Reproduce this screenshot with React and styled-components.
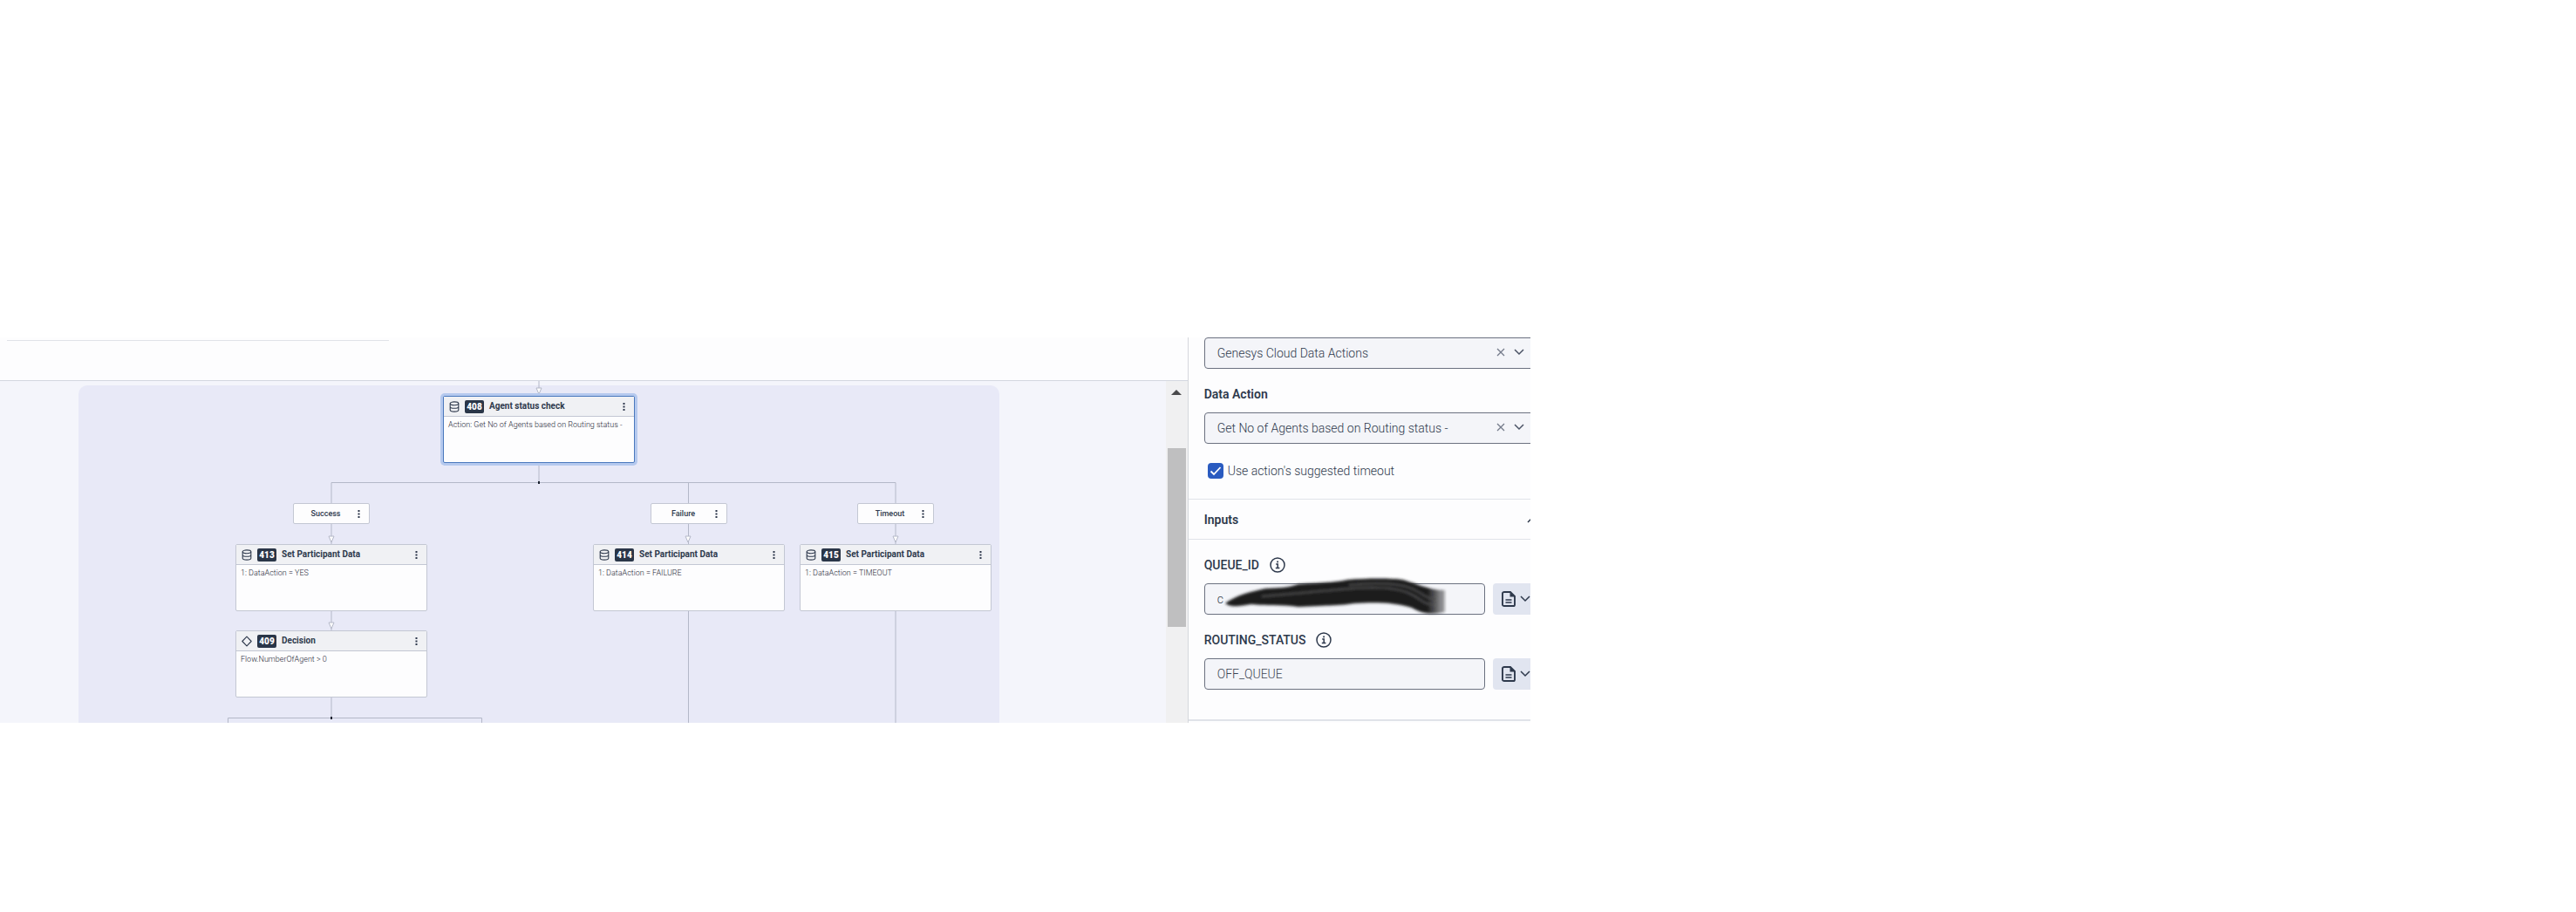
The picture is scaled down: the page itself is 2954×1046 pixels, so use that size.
import React from 'react'
import styled, { createGlobalStyle, css } from 'styled-components'

const GlobalStyle = createGlobalStyle`
  * {
    box-sizing: border-box;
  }
  body {
    margin: 0;
    background: #ffffff;
    font-family: 'Roboto', 'Liberation Sans', sans-serif;
    color: #2e394c;
  }
  button,
  input,
  select {
    font-family: inherit;
    margin: 0;
  }
`

const Page = styled.div`
  padding-top: 387px;
`

const Editor = styled.div`
  width: 59.4%;
  display: grid;
  grid-template-columns: minmax(0, 1fr) 393px;
  background: #fdfdfe;
  overflow: hidden;
`

const Workspace = styled.main`
  display: flex;
  flex-direction: column;
`

const Toolbar = styled.header`
  height: 50px;
  padding: 3px 8px 0;
  border-bottom: 1px solid #d3d7e0;

  hr {
    width: 438px;
    margin: 0;
    border: none;
    border-top: 1px solid #e1e3e8;
  }
`

const CanvasRow = styled.div`
  display: flex;
  flex: 1;
`

const Canvas = styled.div`
  position: relative;
  flex: 1;
  min-height: 392px;
  padding: 5px 0 0 90px;
  display: flex;
  background: #f4f5fb;
  overflow: hidden;
`

const Group = styled.div`
  width: 1056px;
  border-radius: 10px 10px 0 0;
  background: #e8e9f7;
`

const Lines = styled.svg`
  position: absolute;
  top: 0;
  left: 0;
  width: 1146px;
  height: 392px;
`

const onCanvas = css`
  position: absolute;
  left: ${(props) => props.$x}px;
  top: ${(props) => props.$y}px;
`

const Node = styled.article`
  ${onCanvas}
  width: 220px;
  height: 77px;
  background: #fdfdfe;
  border: 1px solid ${(props) => (props.$selected ? '#4a78bd' : '#c3c7d3')};
  border-radius: 2px;
  box-shadow: ${(props) => (props.$selected ? '0 0 0 3px #b5c9ee' : 'none')};
`

const NodeHeader = styled.div`
  height: 23px;
  padding: 0 10px 0 6px;
  display: flex;
  align-items: center;
  background: #f0f1f4;
  border-bottom: 1px solid #c3c7d3;

  h3 {
    flex: 1;
    margin: 0 0 0 6px;
    font-size: 10px;
    line-height: 14px;
    font-weight: 700;
  }
`

const Badge = styled.span`
  width: 22px;
  margin-left: 6px;
  border-radius: 2px;
  background: #2a3648;
  color: #ffffff;
  font-size: 10px;
  line-height: 15px;
  font-weight: 900;
  text-align: center;
`

const NodeText = styled.p`
  margin: 0;
  padding: 3px 5px;
  font-size: 9px;
  line-height: 12px;
  font-weight: 300;
  color: #1f2838;
  white-space: nowrap;
`

const Outcome = styled.div`
  ${onCanvas}
  width: 88px;
  height: 24px;
  padding-right: 10px;
  display: flex;
  align-items: center;
  background: #fdfdfe;
  border: 1px solid #c3c7d3;
  border-radius: 2px;

  span {
    flex: 1;
    font-size: 9px;
    line-height: 12px;
    font-weight: 500;
    text-align: center;
  }
`

const IconButton = styled.button`
  display: flex;
  padding: 0;
  border: none;
  background: none;
  color: inherit;
`

const Scrollbar = styled.div`
  width: 25px;
  padding: 10px 2px 0;
  display: flex;
  flex-direction: column;
  align-items: center;
  gap: 61px;
  background: #f0f0f1;
`

const ScrollThumb = styled.div`
  width: 21px;
  height: 205px;
  background: #bfbfc0;
`

const Panel = styled.aside`
  border-left: 1px solid #d5d7dc;
`

const Section = styled.section`
  height: ${(props) => props.$height}px;
  padding-left: 18px;
  border-bottom: ${(props) => props.$line || 1}px solid #e0e3e9;
`

const SectionHeader = styled(Section)`
  display: flex;
  align-items: center;
  justify-content: space-between;

  h2 {
    margin: 0;
    font-size: 14px;
    line-height: 20px;
    font-weight: 600;
  }
  button {
    margin-right: -8px;
  }
`

const Label = styled.label`
  font-size: 14px;
  line-height: 20px;
  font-weight: ${(props) => (props.$medium ? 500 : 600)};
`

const LabelRow = styled.div`
  height: 50px;
  padding-top: 8px;
  display: flex;
  align-items: center;
  gap: 12px;
`

const SelectBox = styled.div`
  position: relative;
  margin-right: -8px;
`

const Select = styled.select`
  width: 100%;
  height: 36px;
  padding: 0 60px 0 14px;
  appearance: none;
  border: 1px solid #6b7180;
  border-radius: 4px;
  background: #f4f5f9;
  color: #2e394c;
  font-size: 14px;
  font-weight: 300;
`

const SelectIcons = styled.div`
  position: absolute;
  top: 0;
  right: 15px;
  height: 34px;
  display: flex;
  align-items: center;
  gap: 10px;
  color: #4b5466;
`

const CheckRow = styled.label`
  height: 62px;
  padding: 0 0 0 4px;
  display: flex;
  align-items: center;
  gap: 5px;
  color: #2e394c;
  font-size: 14px;
  line-height: 20px;
  font-weight: 300;

  span {
    position: relative;
    display: flex;
  }
  input {
    width: 18px;
    height: 18px;
    appearance: none;
    border-radius: 4px;
    background: #2a5bc0;
  }
  svg {
    position: absolute;
    top: 3px;
    left: 2px;
  }
`

const InputRow = styled.div`
  position: relative;
  display: flex;
  gap: 9px;
  margin-right: -8px;
`

const Input = styled.input`
  width: 322px;
  height: 36px;
  padding: 0 14px;
  border: 1px solid #6b7180;
  border-radius: 4px;
  background: #f4f5f9;
  color: #3c4452;
  font-size: 14px;
  font-weight: 300;
`

const ModeButton = styled.button`
  flex: 1;
  height: 36px;
  padding: 0 0 0 10px;
  display: flex;
  align-items: center;
  gap: 5px;
  border: none;
  border-radius: 4px;
  background: #e1e5f0;
  color: #2e394c;
`

const Scribble = styled.svg`
  position: absolute;
  top: -8px;
  left: 16px;
`

const DotsIcon = () => (
  <svg width="3" height="11" viewBox="0 0 3 11" fill="currentColor">
    <rect x="0.5" y="1" width="2" height="2" />
    <rect x="0.5" y="4.5" width="2" height="2" />
    <rect x="0.5" y="8" width="2" height="2" />
  </svg>
)

const DataIcon = () => (
  <svg width="12" height="13" viewBox="0 0 12 13" fill="none" stroke="currentColor" strokeWidth="1.1">
    <ellipse cx="6" cy="2.8" rx="4.8" ry="1.9" />
    <path d="M1.2 2.8v7.4c0 1 2.1 1.9 4.8 1.9s4.8-.9 4.8-1.9V2.8M1.2 6.4c0 1 2.1 1.8 4.8 1.8s4.8-.8 4.8-1.8" />
  </svg>
)

const DecisionIcon = () => (
  <svg width="12" height="13" viewBox="0 0 12 13" fill="none" stroke="currentColor" strokeWidth="1.1">
    <path d="M6 1.2 11.2 6.5 6 11.8.8 6.5z" strokeLinejoin="round" />
  </svg>
)

const ChevronIcon = ({ up }) => (
  <svg width="12" height="8" viewBox="0 0 12 8" fill="none" stroke="currentColor" strokeWidth="1.5">
    <path d={up ? 'M1 7l5-5 5 5' : 'M1 1l5 5 5-5'} />
  </svg>
)

const CloseIcon = () => (
  <svg width="10" height="10" viewBox="0 0 10 10" fill="none" stroke="#747b8a" strokeWidth="1.3">
    <path d="M1 1l8 8M9 1L1 9" />
  </svg>
)

const InfoIcon = () => (
  <svg width="18" height="18" viewBox="0 0 18 18" fill="none" stroke="currentColor" strokeWidth="1.5">
    <circle cx="9" cy="9" r="8" />
    <path d="M7.2 8h2v4.6M6.8 12.6h4.6" />
    <path d="M8.2 4.4h1.8v1.8H8.2z" fill="currentColor" stroke="none" />
  </svg>
)

const DocumentIcon = () => (
  <svg width="16" height="18" viewBox="0 0 16 18" fill="none" stroke="currentColor" strokeWidth="1.9">
    <path d="M3 1h7l5 5v9.4c0 1-.6 1.6-1.6 1.6H3c-1.2 0-2-.6-2-1.6V2.6C1 1.6 1.8 1 3 1z" />
    <path d="M9.5 1v5.5H15z" fill="currentColor" stroke="none" />
    <path d="M4.500 10h7M4.500 13h7" strokeWidth="1.5" />
  </svg>
)

const nodes = [
  { id: 408, title: 'Agent status check', text: 'Action: Get No of Agents based on Routing status -', x: 508, y: 17, selected: true },
  { id: 413, title: 'Set Participant Data', text: '1: DataAction = YES', x: 270, y: 187 },
  { id: 414, title: 'Set Participant Data', text: '1: DataAction = FAILURE', x: 680, y: 187 },
  { id: 415, title: 'Set Participant Data', text: '1: DataAction = TIMEOUT', x: 917, y: 187 },
  { id: 409, title: 'Decision', text: 'Flow.NumberOfAgent > 0', x: 270, y: 286, decision: true },
]

const outcomes = [
  { name: 'Success', x: 336, y: 140 },
  { name: 'Failure', x: 746, y: 140 },
  { name: 'Timeout', x: 983, y: 140 },
]

const arrows = [
  [618, 16],
  [380, 186],
  [789, 186],
  [1027, 186],
  [380, 285],
]

const FlowLines = () => (
  <Lines viewBox="0 0 1146 392" fill="none" stroke="#b4b8c8">
    <path d="M618 0v17M618 94v23M380 140v-23.5h647V140M789.500 116.500V140" />
    <path d="M380 164v23M789.500 164v23M1027 164v23M380 264v22M380 363v23" />
    <path d="M789.500 264v128M1027 264v128M261.500 392v-5.500h291v5.500" />
    {arrows.map(([x, y]) => (
      <path key={x + '-' + y} d={`M${x - 3} ${y - 8}h6l-3 7z`} fill="#ffffff" />
    ))}
    <rect x="617" y="115" width="2" height="3" fill="#1b2230" stroke="none" />
    <rect x="379" y="385" width="2" height="3" fill="#1b2230" stroke="none" />
  </Lines>
)

const ActionSelect = ({ id, label, value }) => (
  <SelectBox>
    <Select id={id} aria-label={label} defaultValue={value}>
      <option>{value}</option>
    </Select>
    <SelectIcons>
      <IconButton aria-label="Clear">
        <CloseIcon />
      </IconButton>
      <ChevronIcon />
    </SelectIcons>
  </SelectBox>
)

const InputField = ({ id, value, children }) => (
  <>
    <LabelRow>
      <Label htmlFor={id} $medium>
        {id}
      </Label>
      <IconButton aria-label={'About ' + id}>
        <InfoIcon />
      </IconButton>
    </LabelRow>
    <InputRow>
      <Input id={id} defaultValue={value} />
      <ModeButton aria-label="Value mode">
        <DocumentIcon />
        <ChevronIcon />
      </ModeButton>
      {children}
    </InputRow>
  </>
)

// hand-drawn marker that hides the queue id
const BlackMarker = () => (
  <Scribble width="266" height="50" viewBox="0 -3 266 50">
    <defs>
      <filter id="soft" x="-5%" y="-20%" width="110%" height="140%">
        <feGaussianBlur stdDeviation="1.6" />
      </filter>
      <linearGradient id="ink" x1="0" x2="1">
        <stop offset="0.92" stopColor="#1c1c1d" />
        <stop offset="1" stopColor="#1c1c1d" stopOpacity="0.35" />
      </linearGradient>
    </defs>
    <g filter="url(#soft)">
      <path
        d="M8 28C22 18 36 15 54 11C68 10 78 11 92 6C110 4 130 5 148 1C170 -1 200 -1 212 1C230 6 238 12 260 13V38C244 42 232 39 222 33C200 26 175 27 156 28C140 31 120 30 92 32C70 29 55 31 38 29C25 31 14 33 8 28z"
        fill="url(#ink)"
      />
      <path
        d="M50 20C90 16 110 15 140 12S200 8 218 16S232 28 248 30M150 7C180 4 210 4 226 13S238 22 250 23"
        fill="none"
        stroke="#48484a"
        strokeWidth="2"
      />
    </g>
  </Scribble>
)

export default function App() {
  return (
    <Page>
      <GlobalStyle />
      <Editor>
        <Workspace>
          <Toolbar>
            <hr />
          </Toolbar>
          <CanvasRow>
            <Canvas>
              <Group />
              <FlowLines />
              {outcomes.map((outcome) => (
                <Outcome key={outcome.name} $x={outcome.x} $y={outcome.y}>
                  <span>{outcome.name}</span>
                  <IconButton aria-label={outcome.name + ' menu'}>
                    <DotsIcon />
                  </IconButton>
                </Outcome>
              ))}
              {nodes.map((node) => (
                <Node key={node.id} $x={node.x} $y={node.y} $selected={node.selected}>
                  <NodeHeader>
                    {node.decision ? <DecisionIcon /> : <DataIcon />}
                    <Badge>{node.id}</Badge>
                    <h3>{node.title}</h3>
                    <IconButton aria-label={node.title + ' menu'}>
                      <DotsIcon />
                    </IconButton>
                  </NodeHeader>
                  <NodeText>{node.text}</NodeText>
                </Node>
              ))}
            </Canvas>
            <Scrollbar>
              <svg width="12" height="6" viewBox="0 0 12 6" fill="#4a4a4c">
                <path d="M0 6l6-6 6 6z" />
              </svg>
              <ScrollThumb />
            </Scrollbar>
          </CanvasRow>
        </Workspace>
        <Panel>
          <Section $height={186}>
            <ActionSelect id="category" label="Category" value="Genesys Cloud Data Actions" />
            <LabelRow>
              <Label htmlFor="data-action">Data Action</Label>
            </LabelRow>
            <ActionSelect id="data-action" value="Get No of Agents based on Routing status -" />
            <CheckRow>
              <span>
                <input type="checkbox" defaultChecked />
                <svg width="14" height="12" viewBox="0 0 14 12" fill="none" stroke="#ffffff" strokeWidth="1.8">
                  <path d="M1.5 6.5l3.5 3.5 7.5-8" />
                </svg>
              </span>
              Use action's suggested timeout
            </CheckRow>
          </Section>
          <SectionHeader as="div" $height={46}>
            <h2>Inputs</h2>
            <IconButton aria-label="Collapse inputs">
              <ChevronIcon up />
            </IconButton>
          </SectionHeader>
          <Section $height={208} $line={2}>
            <InputField id="QUEUE_ID" value="c">
              <BlackMarker />
            </InputField>
            <InputField id="ROUTING_STATUS" value="OFF_QUEUE" />
          </Section>
        </Panel>
      </Editor>
    </Page>
  )
}
